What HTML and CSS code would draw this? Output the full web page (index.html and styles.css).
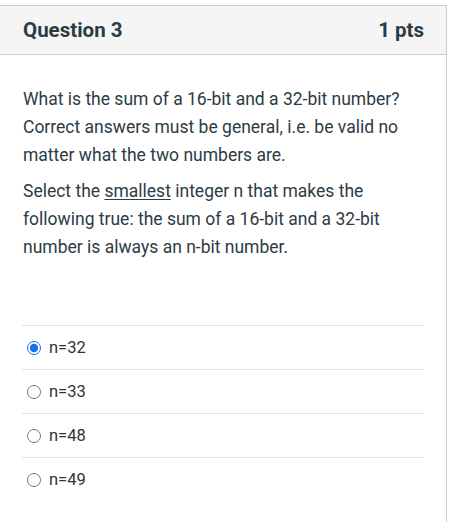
FILE: index.html
```html
<!DOCTYPE html>
<html>
<head>
<meta charset="utf-8">
<link rel="stylesheet" href="styles.css">
</head>
<body>
<div class="card">
  <div class="header">
    <span class="title">Question 3</span>
    <span class="pts">1 pts</span>
  </div>
  <div class="content">
    <p>What is the sum of a 16-bit and a 32-bit number? Correct answers must be general, i.e. be valid no matter what the two numbers are.</p>
    <p>Select the <u class="ul">smallest</u> integer n that makes the following true: the sum of a 16-bit and a 32-bit number is always an n-bit number.</p>
  </div>
  <div class="answers">
    <label class="answer"><input type="radio" name="q3" checked><span>n=32</span></label>
    <label class="answer"><input type="radio" name="q3"><span>n=33</span></label>
    <label class="answer"><input type="radio" name="q3"><span>n=48</span></label>
    <label class="answer"><input type="radio" name="q3"><span>n=49</span></label>
  </div>
</div>
</body>
</html>
```

FILE: styles.css
```css
html, body {
  margin: 0;
  padding: 0;
  background: #fff;
  overflow: hidden;
}
body {
  padding-top: 5px;
  font-family: Roboto, "Liberation Sans", sans-serif;
  color: #2d3b45;
}
.card {
  width: 448px;
  margin-left: -1px;
  border: 1px solid #c7cdd1;
  border-bottom: none;
  height: 517px;
  box-sizing: border-box;
}
.header {
  display: flex;
  justify-content: space-between;
  align-items: center;
  height: 48px;
  padding: 0 22px 0 23px;
  background: #f5f5f5;
  border-bottom: 1px solid #c7cdd1;
}
.title, .pts {
  font-weight: bold;
  font-size: 20.5px;
}
.content {
  padding: 30px 22px 0 23px;
  font-size: 17.5px;
  line-height: 28px;
}
.content p {
  margin: 0 0 8px 0;
}
.ul {
  text-underline-offset: 2px;
}
.answers {
  margin: 64px 22px 0 22px;
}
.answer {
  display: flex;
  align-items: center;
  height: 43px;
  border-top: 1px solid #e3e3e3;
  font-size: 16.5px;
  color: #333;
}
.answer input {
  width: 14px;
  height: 14px;
  margin: 0 8px 0 5px;
  accent-color: #1a73e8;
}
```
